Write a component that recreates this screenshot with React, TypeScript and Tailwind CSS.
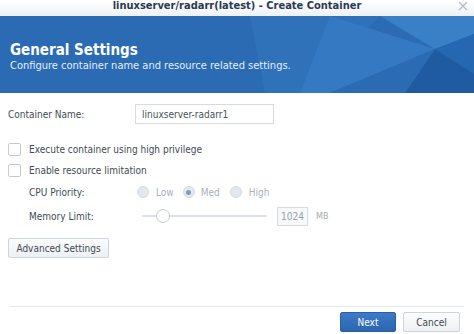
import React from "react";

const font = "font-['DejaVu_Sans_Condensed','DejaVu_Sans',sans-serif]";

function Checkbox() {
  return (
    <span className="block w-[13px] h-[13px] rounded-[2px] border border-[#c3cad3] bg-white" />
  );
}

function Radio({ checked }: { checked?: boolean }) {
  return (
    <span className="flex items-center justify-center w-[12px] h-[12px] rounded-full border border-[#d3dae2] bg-[#e3e8ee]">
      {checked && <span className="block w-[5px] h-[5px] rounded-full bg-[#7d9cc4]" />}
    </span>
  );
}

function Banner() {
  return (
    <div className="relative h-[77px] bg-[#2b6bb4] overflow-hidden">
      {/* facet background */}
      <svg className="absolute inset-0" width="474" height="77" viewBox="0 0 474 77">
        <polygon points="250,0 380,0 300,77 265,77" fill="#2f72ba" />
        <polygon points="330,0 435,33 330,77 300,77" fill="#3479c2" />
        <polygon points="380,0 474,0 474,18 435,33" fill="#3a80c7" />
        <polygon points="435,33 474,18 474,58" fill="#2567b0" />
        <polygon points="435,33 474,58 474,77 405,77" fill="#1f5ba0" />
        <polygon points="435,33 405,77 330,77" fill="#2a6bb4" />
      </svg>
      <div className="relative pl-[10px] pt-[25px] text-white">
        <div className="text-[15px] font-bold leading-[18px]">General Settings</div>
        <div className="text-[11px] leading-[14px] text-[#e6eef8]">
          Configure container name and resource related settings.
        </div>
      </div>
    </div>
  );
}

export default function App() {
  return (
    <div className={`w-[474px] h-[334px] overflow-hidden bg-white text-[#414b55] ${font}`}>
      {/* Title bar */}
      <div className="relative h-[16px] bg-gradient-to-b from-white to-[#eef1f4] flex items-center justify-center">
        <span className="text-[11px] font-bold leading-[16px] text-[#2a3a55] -mt-[5px]">
          linuxserver/radarr(latest) - Create Container
        </span>
        <svg className="absolute right-[6px] top-[1px]" width="10" height="10" viewBox="0 0 10 10">
          <path d="M1 1L9 9M9 1L1 9" stroke="#b5bcc4" strokeWidth="1.2" />
        </svg>
      </div>

      <Banner />

      <div className="pl-[8px] text-[10px] leading-[13px]">
        {/* Container name */}
        <div className="flex items-center mt-[11px] h-[20px]">
          <span className="w-[127px]">Container Name:</span>
          <span className="flex items-center w-[139px] h-[20px] border border-[#d6dbe1] px-[6px] text-[#4a535c]">
            linuxserver-radarr1
          </span>
        </div>

        {/* Checkboxes */}
        <div className="flex items-center gap-[8px] mt-[19px] h-[13px]">
          <Checkbox />
          <span>Execute container using high privilege</span>
        </div>
        <div className="flex items-center gap-[8px] mt-[8px] h-[13px]">
          <Checkbox />
          <span>Enable resource limitation</span>
        </div>

        {/* CPU priority */}
        <div className="flex items-center pl-[21px] mt-[8px] h-[14px]">
          <span className="w-[108px]">CPU Priority:</span>
          <div className="flex items-center text-[#a9b0b8]">
            <Radio />
            <span className="ml-[7px] mr-[9px]">Low</span>
            <Radio checked />
            <span className="ml-[6px] mr-[10px]">Med</span>
            <Radio />
            <span className="ml-[7px]">High</span>
          </div>
        </div>

        {/* Memory limit */}
        <div className="flex items-center pl-[21px] mt-[7px] h-[20px]">
          <span className="w-[113px]">Memory Limit:</span>
          <div className="relative w-[125px] h-[14px] flex items-center">
            <span className="block w-full h-[2px] bg-[#dde2e8]" />
            <span className="absolute left-[14px] top-0 w-[14px] h-[14px] rounded-full bg-white border border-[#c4ccd5]" />
          </div>
          <span className="ml-[10px] flex items-center justify-center w-[31px] h-[19px] border border-[#d6dbe1] bg-[#f6f8fa] text-[#9aa2ab]">
            1024
          </span>
          <span className="ml-[8px] text-[#a3aab2] text-[9px]">MB</span>
        </div>

        {/* Advanced */}
        <button className="mt-[12px] h-[20px] w-[101px] border border-[#cdd4dc] rounded-[2px] bg-gradient-to-b from-[#fafbfc] to-[#eef1f4] text-[10px] text-[#3f4953]">
          Advanced Settings
        </button>
      </div>

      {/* Footer */}
      <div className="mx-[10px] mt-[48px] h-px bg-[#e3e7eb]" />
      <div className="flex justify-end gap-[7px] pr-[14px] mt-[5px] text-[10px]">
        <button className="h-[20px] w-[56px] rounded-[2px] border border-[#2a5f9f] bg-gradient-to-b from-[#3d7bc7] to-[#2b65ae] text-white">
          Next
        </button>
        <button className="h-[20px] w-[57px] rounded-[2px] border border-[#cdd4dc] bg-gradient-to-b from-[#fbfcfd] to-[#eef1f4] text-[#3f4953]">
          Cancel
        </button>
      </div>
    </div>
  );
}
